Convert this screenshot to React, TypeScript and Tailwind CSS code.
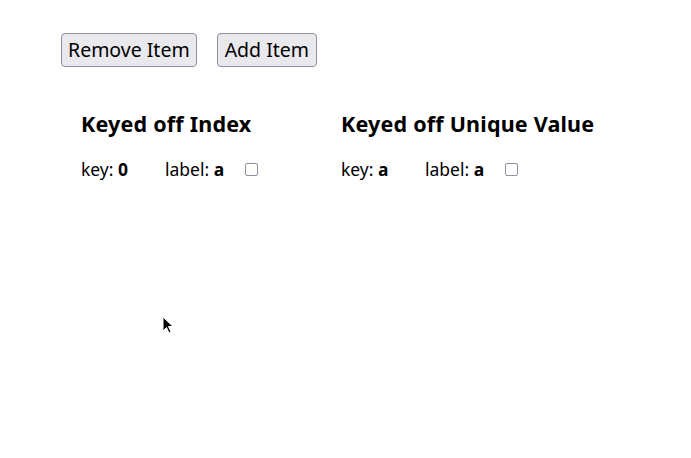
const ITEMS = [{ id: 'a', label: 'a' }]

function Row({ k, label }: { k: string; label: string }) {
    return (
        <div className="flex items-center h-6 text-[17.5px]">
            <span className="w-[84px]">
                key: <b>{k}</b>
            </span>
            <span className="w-[80px]">
                label: <b>{label}</b>
            </span>
            <span className="w-[13px] h-[13px] border border-[#8f8f9d] rounded-[2px] bg-white" />
        </div>
    )
}

export default function App() {
    return (
        <div className="relative w-[691px] h-[458px] bg-white text-black font-['Noto_Sans',sans-serif]">
            <div className="flex gap-5 pl-[61px] pt-[33px]">
                <button className="h-[34px] px-[6px] bg-[#e9e9ed] border border-[#8f8f9d] rounded-[4px] text-[19.5px] leading-none">
                    Remove Item
                </button>
                <button className="h-[34px] px-[7px] bg-[#e9e9ed] border border-[#8f8f9d] rounded-[4px] text-[19.5px] leading-none">
                    Add Item
                </button>
            </div>

            <div className="flex pl-[81px] pt-[43px]">
                <div className="w-[260px]">
                    <h2 className="text-[21.5px] font-bold leading-7 tracking-[0.2px]">Keyed off Index</h2>
                    <div className="mt-[19px]">
                        {ITEMS.map((item, i) => (
                            <Row key={i} k={String(i)} label={item.label} />
                        ))}
                    </div>
                </div>
                <div className="w-[260px]">
                    <h2 className="text-[21.5px] font-bold leading-7 tracking-[0.2px]">Keyed off Unique Value</h2>
                    <div className="mt-[19px]">
                        {ITEMS.map(item => (
                            <Row key={item.id} k={item.id} label={item.label} />
                        ))}
                    </div>
                </div>
            </div>

            {/* mouse pointer */}
            <svg className="absolute left-[162px] top-[316px]" width="12" height="19" viewBox="0 0 12 19">
                <path d="M1 1 L1 15 L4.5 11.5 L7 17 L9 16 L6.5 10.5 L11 10.5 Z" fill="black" stroke="white" strokeWidth="1" />
            </svg>
        </div>
    )
}
